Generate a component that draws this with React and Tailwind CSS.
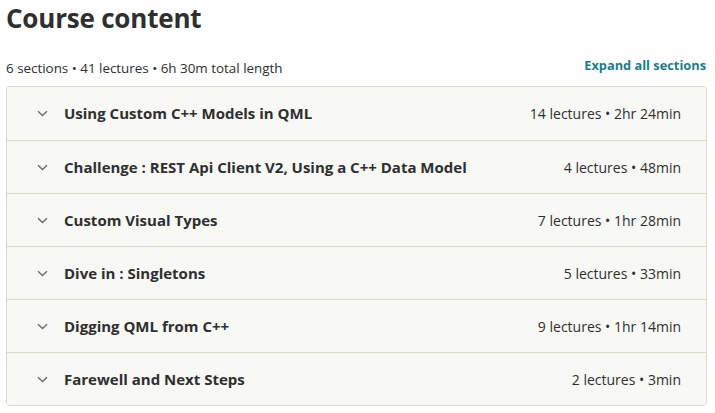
import React from "react";

const sections = [
  ["Using Custom C++ Models in QML", "14 lectures • 2hr 24min"],
  ["Challenge : REST Api Client V2, Using a C++ Data Model", "4 lectures • 48min"],
  ["Custom Visual Types", "7 lectures • 1hr 28min"],
  ["Dive in : Singletons", "5 lectures • 33min"],
  ["Digging QML from C++", "9 lectures • 1hr 14min"],
  ["Farewell and Next Steps", "2 lectures • 3min"],
];

function Chevron() {
  return (
    <svg width="11" height="7" viewBox="0 0 11 7" fill="none" className="shrink-0">
      <path d="M1 1.2L5.5 5.5L10 1.2" stroke="#6a6f73" strokeWidth="1.5" />
    </svg>
  );
}

export default function App() {
  return (
    <div className="w-[715px] h-[413px] bg-white text-[#2d2f31] pl-[6px] pr-[8px]" style={{ fontFamily: "'Open Sans', sans-serif" }}>
      <h2 className="text-[26px] font-bold leading-[36px] h-[58px] tracking-[-0.2px]">Course content</h2>
      <div className="flex items-center justify-between h-[20px]">
        <span className="text-[13.4px]">6 sections • 41 lectures • 6h 30m total length</span>
        <span className="text-[12.8px] font-bold text-[#197d8a] pr-[1px] mb-[4px]">Expand all sections</span>
      </div>
      <div className="mt-[8px] border border-[#d9dacc] rounded-[4px] overflow-hidden">
        {sections.map(([t, m], i) => (
          <div key={i} className={"h-[53px] bg-[#f8f8f4] flex items-center pl-[30px] pr-[25px] " + (i > 0 ? "border-t border-[#d9dacc]" : "")}>
            <Chevron />
            <span className="ml-[16px] text-[15px] font-bold flex-1">{t}</span>
            <span className="text-[14px]">{m}</span>
          </div>
        ))}
      </div>
    </div>
  );
}
